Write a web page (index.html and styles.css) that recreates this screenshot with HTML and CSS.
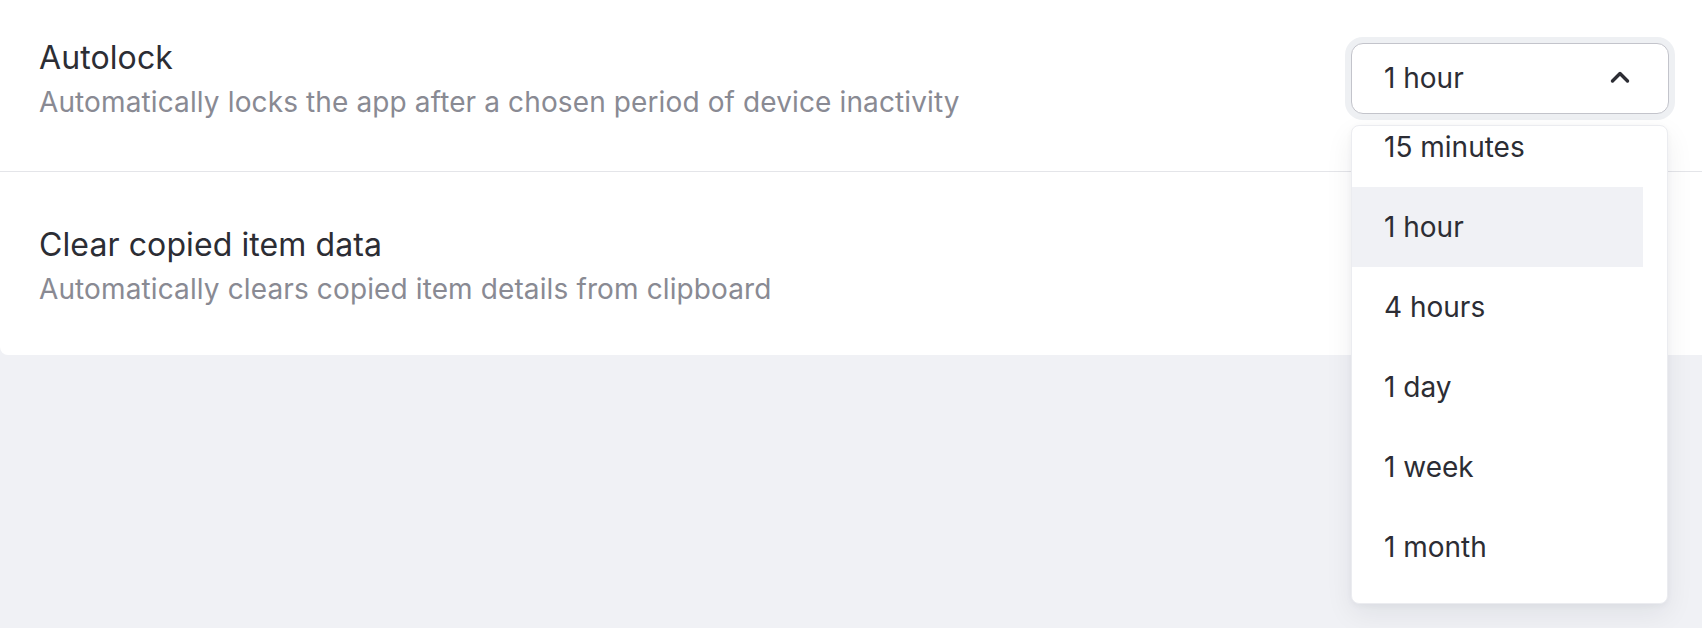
FILE: index.html
```html
<!DOCTYPE html>
<html lang="en">
<head>
<meta charset="utf-8">
<title>Settings</title>
<link rel="stylesheet" href="styles.css">
</head>
<body>
<div class="page">
  <div class="card">
    <div class="row row-first">
      <div class="text">
        <div class="title">Autolock</div>
        <div class="subtitle">Automatically locks the app after a chosen period of device inactivity</div>
      </div>
      <div class="select-wrap">
        <div class="select">
          <span class="select-value">1 hour</span>
          <svg class="chevron" width="24" height="24" viewBox="0 0 24 24" fill="none" stroke="currentColor" stroke-width="3.4" stroke-linecap="round" stroke-linejoin="round"><polyline points="4.5,16 12,8.5 19.5,16"/></svg>
        </div>
        <div class="menu">
          <ul class="options">
            <li class="option">15 minutes</li>
            <li class="option active">1 hour</li>
            <li class="option">4 hours</li>
            <li class="option">1 day</li>
            <li class="option">1 week</li>
            <li class="option">1 month</li>
          </ul>
        </div>
      </div>
    </div>
    <div class="row row-second">
      <div class="text">
        <div class="title">Clear copied item data</div>
        <div class="subtitle">Automatically clears copied item details from clipboard</div>
      </div>
    </div>
  </div>
</div>
</body>
</html>
```

FILE: styles.css
```css
* { box-sizing: border-box; }

html, body {
  margin: 0;
  padding: 0;
  height: 100%;
  background: #f0f1f5;
}

body {
  font-family: "Inter", "Noto Sans", sans-serif;
  color: #2c2d34;
}

.page {
  min-height: 628px;
  height: 100%;
  background: #f0f1f5;
  overflow: hidden;
}

.card {
  background: #ffffff;
  margin-top: -13px;
  border-bottom-left-radius: 8px;
}

.row {
  display: flex;
  align-items: center;
  justify-content: space-between;
  padding-left: 39px;
  padding-right: 33px;
}

.row-first {
  height: 185px;
  border-bottom: 1px solid #e4e5e9;
}

.row-second {
  height: 183px;
  padding-top: 5px;
}

.title {
  font-size: 32px;
  line-height: 40px;
  letter-spacing: 0.1px;
  color: #2c2d34;
}

.subtitle {
  margin-top: 6px;
  font-size: 28px;
  line-height: 36px;
  letter-spacing: 0.12px;
  color: #898a93;
}

.select-wrap {
  position: relative;
  width: 318px;
  margin-top: -2px;
}

.select {
  height: 71px;
  border: 1.5px solid #c3c4cb;
  border-radius: 12px;
  box-shadow: 0 0 0 6px #eef0f3;
  display: flex;
  align-items: center;
  justify-content: space-between;
  padding: 0 36px 0 32px;
  background: #ffffff;
}

.select-value {
  font-size: 28px;
  line-height: 36px;
  color: #2c2d34;
}

.chevron {
  color: #2c2d34;
  margin-top: -2px;
}

.menu {
  position: absolute;
  top: 82px;
  left: 0;
  width: 317px;
  height: 479px;
  background: #ffffff;
  border: 1px solid #ebecf0;
  border-radius: 8px;
  box-shadow: 0 10px 28px rgba(20, 22, 40, 0.07), 0 2px 6px rgba(20, 22, 40, 0.04);
  overflow: hidden;
  padding-right: 24px;
  z-index: 10;
}

.options {
  list-style: none;
  margin: -19px 0 0 0;
  padding: 0;
}

.option {
  height: 80px;
  display: flex;
  align-items: center;
  padding-left: 32px;
  font-size: 28px;
  line-height: 36px;
  color: #2c2d34;
}

.option.active {
  background: #f0f1f5;
}
```
